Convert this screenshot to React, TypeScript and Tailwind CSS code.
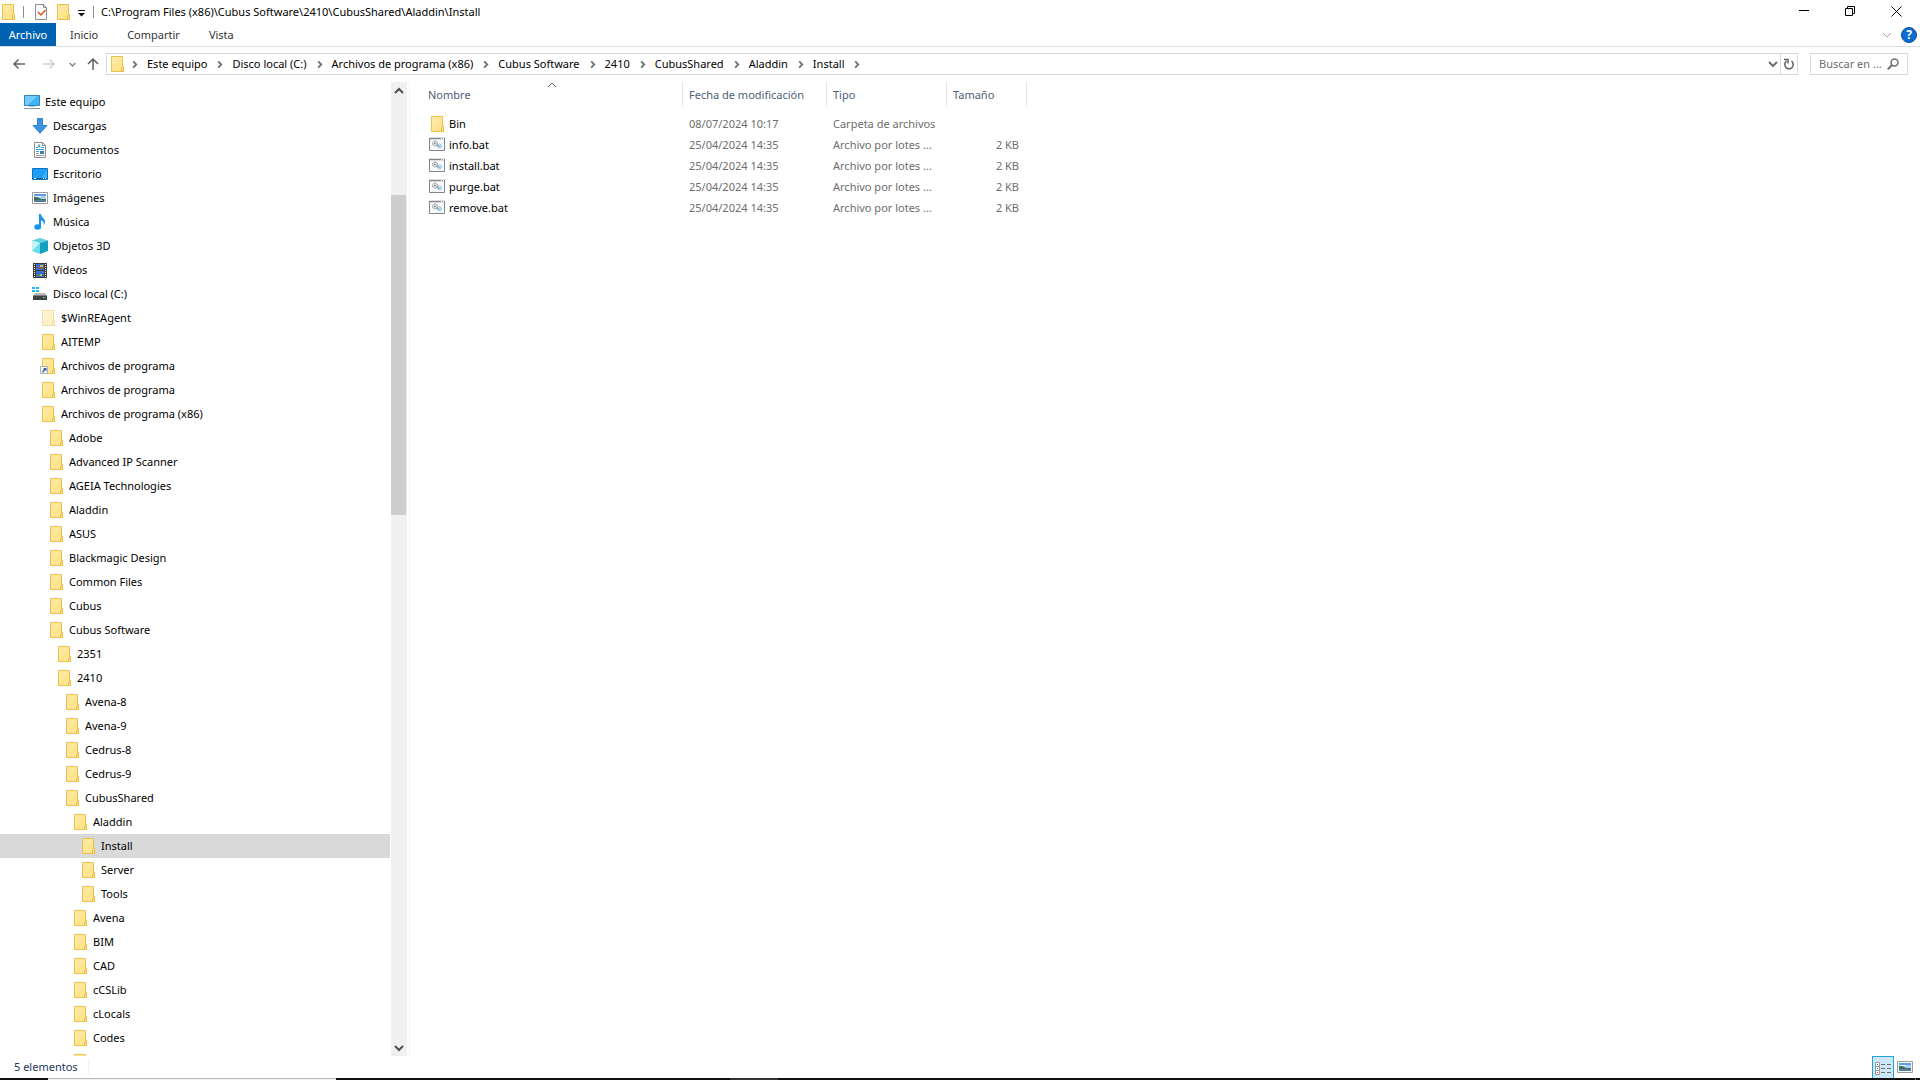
import React from 'react'

type IconName =
    | 'pc' | 'downloads' | 'documents' | 'desktop' | 'pictures' | 'music'
    | 'objects' | 'videos' | 'disk' | 'folder' | 'hidden' | 'shortcut' | 'bat'

type TreeItem = { name: string; level: number; icon?: IconName; selected?: boolean }

const tree: TreeItem[] = [
    { name: 'Este equipo', level: 0, icon: 'pc' },
    { name: 'Descargas', level: 1, icon: 'downloads' },
    { name: 'Documentos', level: 1, icon: 'documents' },
    { name: 'Escritorio', level: 1, icon: 'desktop' },
    { name: 'Imágenes', level: 1, icon: 'pictures' },
    { name: 'Música', level: 1, icon: 'music' },
    { name: 'Objetos 3D', level: 1, icon: 'objects' },
    { name: 'Vídeos', level: 1, icon: 'videos' },
    { name: 'Disco local (C:)', level: 1, icon: 'disk' },
    { name: '$WinREAgent', level: 2, icon: 'hidden' },
    { name: 'AITEMP', level: 2 },
    { name: 'Archivos de programa', level: 2, icon: 'shortcut' },
    { name: 'Archivos de programa', level: 2 },
    { name: 'Archivos de programa (x86)', level: 2 },
    { name: 'Adobe', level: 3 },
    { name: 'Advanced IP Scanner', level: 3 },
    { name: 'AGEIA Technologies', level: 3 },
    { name: 'Aladdin', level: 3 },
    { name: 'ASUS', level: 3 },
    { name: 'Blackmagic Design', level: 3 },
    { name: 'Common Files', level: 3 },
    { name: 'Cubus', level: 3 },
    { name: 'Cubus Software', level: 3 },
    { name: '2351', level: 4 },
    { name: '2410', level: 4 },
    { name: 'Avena-8', level: 5 },
    { name: 'Avena-9', level: 5 },
    { name: 'Cedrus-8', level: 5 },
    { name: 'Cedrus-9', level: 5 },
    { name: 'CubusShared', level: 5 },
    { name: 'Aladdin', level: 6 },
    { name: 'Install', level: 7, selected: true },
    { name: 'Server', level: 7 },
    { name: 'Tools', level: 7 },
    { name: 'Avena', level: 6 },
    { name: 'BIM', level: 6 },
    { name: 'CAD', level: 6 },
    { name: 'cCSLib', level: 6 },
    { name: 'cLocals', level: 6 },
    { name: 'Codes', level: 6 },
    { name: '', level: 6 },
]

const indent = ['pl-6', 'pl-8', 'pl-10', 'pl-12', 'pl-14', 'pl-16', 'pl-18', 'pl-20']

const crumbs = ['Este equipo', 'Disco local (C:)', 'Archivos de programa (x86)', 'Cubus Software', '2410', 'CubusShared', 'Aladdin', 'Install']

const files: { name: string; date: string; type: string; size: string; icon: IconName }[] = [
    { name: 'Bin', date: '08/07/2024 10:17', type: 'Carpeta de archivos', size: '', icon: 'folder' },
    { name: 'info.bat', date: '25/04/2024 14:35', type: 'Archivo por lotes ...', size: '2 KB', icon: 'bat' },
    { name: 'install.bat', date: '25/04/2024 14:35', type: 'Archivo por lotes ...', size: '2 KB', icon: 'bat' },
    { name: 'purge.bat', date: '25/04/2024 14:35', type: 'Archivo por lotes ...', size: '2 KB', icon: 'bat' },
    { name: 'remove.bat', date: '25/04/2024 14:35', type: 'Archivo por lotes ...', size: '2 KB', icon: 'bat' },
]

function FolderShape() {
    return (
        <>
            <path d="M2.5 .5h11v10h1v5h-12z" fill="#ffe590" stroke="#eac24b" />
            <path d="M3 1h10L3 12z" fill="#ffe9a2" />
            <path d="M12.5 15.5v-4l1-1h1v5z" fill="#ffe590" stroke="#e8bd42" />
        </>
    )
}

function PictureShape() {
    return (
        <>
            <path d="M.5 2.5h15v11H.5z" fill="#fff" stroke="#9b9b9b" />
            <path d="M2 4h12v8H2z" fill="#a9d0f5" />
            <path d="M2 4h12v2H2z" fill="#5e9be8" />
            <path d="M3 6h6v1H3z" fill="#eef6fd" />
            <path d="M2 7l3 0 4 2h5v3H2z" fill="#3f6b62" />
            <path d="M2 10h12v2H2z" fill="#55819b" />
        </>
    )
}

function Icon({ name }: { name: IconName }) {
    return (
        <svg className="w-4 h-4 shrink-0" viewBox="0 0 16 16" fill="none" aria-hidden="true">
            {name === 'folder' && <FolderShape />}
            {name === 'hidden' && <g opacity=".5"><FolderShape /></g>}
            {name === 'shortcut' && (
                <>
                    <FolderShape />
                    <path d="M.5 8.5h7v7h-7z" fill="#fff" stroke="#b0b0b0" />
                    <path d="M3 10h3.500v3.500l-1.200-1.200C4 13 3.700 14 3.700 14.500H2.300c0-1.600.7-2.600 1.800-3.400z" fill="#2a5ea8" />
                </>
            )}
            {name === 'pc' && (
                <>
                    <path d="M.5 1.500h15v10H.5z" fill="#3fb4f5" stroke="#2d87bd" />
                    <path d="M1 2h12L4 11H1z" fill="#74ccfb" />
                    <path d="M5 13h6v-1H5z" fill="#b6c4ce" />
                    <path d="M0 14.500h16" stroke="#8599a8" />
                </>
            )}
            {name === 'downloads' && <path d="M5.500.5h5v7h4.500L8 15.300 1 7.500h4.500z" fill="#3f94e0" stroke="#2f7fca" />}
            {name === 'documents' && (
                <>
                    <path d="M2.500.5h8l3 3v12h-11z" fill="#fff" stroke="#8c8c8c" />
                    <path d="M10.500.5v3h3" stroke="#8c8c8c" />
                    <path d="M4 5.500h2l1-3 1 3M4 7.500h8M4 9.500h3M9 5.500h3" stroke="#2c9be0" />
                    <path d="M8 9h4v3H8z" fill="#3b82a8" />
                    <path d="M4 11.500h3M4 13.500h8" stroke="#9b9b9b" />
                </>
            )}
            {name === 'desktop' && (
                <>
                    <path d="M.5 2.500h15v11H.5z" fill="#1e9df5" stroke="#0b76c4" />
                    <path d="M9 13L15 3v10z" fill="#3fb0fb" />
                    <path d="M1 12.500h14" stroke="#0d5f9e" />
                    <path d="M2 12.500h2M11 12.500h1M13 12.500h1" stroke="#fff" />
                </>
            )}
            {name === 'pictures' && <PictureShape />}
            {name === 'music' && (
                <>
                    <path d="M7 0h2c0 3 4 4.500 4 8 0 1.300-.5 2.500-1.200 3.300.6-3-.8-4.300-2.800-5V13H7z" fill="#1795ee" />
                    <ellipse cx="5.700" cy="13" rx="3.400" ry="2.700" fill="#1795ee" />
                </>
            )}
            {name === 'objects' && (
                <>
                    <path d="M8 0l8 2.500-8 2.500-8-2.500z" fill="#5fd0df" />
                    <path d="M0 2.500L8 5v11l-8-3z" fill="#6fdbe6" />
                    <path d="M16 2.500L8 5v11l8-3z" fill="#12a0c0" />
                    <path d="M0 2.500L8 5l-8 8z" fill="#c4f3f6" />
                </>
            )}
            {name === 'videos' && (
                <>
                    <path d="M1 1h14v15H1z" fill="#3c3c3c" />
                    <path d="M4 2h8v6H4zM4 9h8v6H4z" fill="#3b6fc9" />
                    <path d="M7 5h4v2H7z" fill="#c9412e" />
                    <path d="M8 3h3v2H8zM8 12h2v2H8z" fill="#e0b43b" />
                    <path d="M9 6h2v1H9zM5 13h3v1H5z" fill="#3f9b4c" />
                    <path d="M2.500 2v14M13.500 2v14" stroke="#eee" strokeDasharray="1 1" />
                </>
            )}
            {name === 'disk' && (
                <>
                    <path d="M0 1h3v2H0zM4 1h3v2H4zM0 4h3v2H0zM4 4h3v2H4z" fill="#1fb6f0" />
                    <path d="M3 7h10l2 3H1z" fill="#b9b9b9" />
                    <path d="M1 9.500h14V14H1z" fill="#3f4347" />
                    <path d="M11 11h2v1h-2z" fill="#4be05a" />
                </>
            )}
            {name === 'bat' && (
                <>
                    <path d="M.5 1.500h15v12H.5z" fill="#fafafa" stroke="#7e868c" />
                    <path d="M0 1.500h16" stroke="#7e868c" strokeWidth="1.500" />
                    <path d="M12 1.500h1M14 1.500h1" stroke="#fff" />
                    <circle cx="6" cy="6.500" r="2.500" fill="#e3e6e8" stroke="#7e868c" strokeDasharray="1 .5" />
                    <circle cx="6" cy="6.500" r=".8" fill="#5f676d" />
                    <circle cx="10.500" cy="9" r="2" fill="#c8e8f8" stroke="#64b0d8" strokeDasharray="1 .5" />
                    <path d="M8 7.500l2.500 2.500" stroke="#5f8fa8" />
                </>
            )}
        </svg>
    )
}

function Chevron({ className, d, stroke = 1 }: { className: string; d: string; stroke?: number }) {
    return (
        <svg className={className} viewBox="0 0 10 10" fill="none" stroke="currentColor" strokeWidth={stroke} aria-hidden="true">
            <path d={d} />
        </svg>
    )
}

const DOWN = 'M1 3l4 4 4-4'
const UP = 'M1 7l4-4 4 4'
const RIGHT = 'M3.500 1.500L7 5 3.500 8.500'

function TitleBar() {
    return (
        <header className="flex items-center h-[23px] shrink-0">
            <Icon name="folder" />
            <span className="w-px h-3 ml-[7px] bg-[#8c8c8c]" />
            <button aria-label="Propiedades" className="ml-2.5">
                <svg className="w-4 h-4" viewBox="0 0 16 16" fill="none">
                    <path d="M1.500 .5h8l3 3v12h-11z" fill="#f7f9fb" stroke="#8f8f8f" />
                    <path d="M9.500.5v3h3" stroke="#8f8f8f" />
                    <path d="M4 8l3 3 4.500-5" stroke="#e8551c" strokeWidth="1.500" />
                </svg>
            </button>
            <button aria-label="Nueva carpeta" className="ml-[5px]"><Icon name="folder" /></button>
            <button aria-label="Personalizar barra" className="ml-[7px]">
                <svg className="w-2 h-4" viewBox="0 0 8 16">
                    <path d="M0 6h7v1H0zM0 9h7l-3.500 3.500z" fill="#111" />
                </svg>
            </button>
            <span className="w-px h-3 ml-[7px] bg-[#8c8c8c]" />
            <h1 className="ml-[7px] flex-1">C:\Program Files (x86)\Cubus Software\2410\CubusShared\Aladdin\Install</h1>
            <div className="flex pr-px">
                <button aria-label="Minimizar" className="flex justify-center w-[46px]">
                    <svg className="w-[11px] h-[11px]" viewBox="0 0 11 11" stroke="#000"><path d="M0 4.500h10" /></svg>
                </button>
                <button aria-label="Restaurar" className="flex justify-center w-[46px]">
                    <svg className="w-[11px] h-[11px]" viewBox="0 0 11 11" fill="none" stroke="#000"><path d="M.5 2.500h7v7h-7zM2.500 2.500v-2h7v7h-2" /></svg>
                </button>
                <button aria-label="Cerrar" className="flex justify-center w-[46px]">
                    <svg className="w-[11px] h-[11px]" viewBox="0 0 11 11" stroke="#000"><path d="M.5.5l10 10M10.500.5l-10 10" /></svg>
                </button>
            </div>
        </header>
    )
}

function RibbonTabs() {
    return (
        <nav className="flex items-center h-6 shrink-0 border-b border-[#d9dadb] text-[#333]">
            <button className="w-14 h-full bg-[#0063b1] text-white">Archivo</button>
            <button className="ml-3.5">Inicio</button>
            <button className="ml-[29px]">Compartir</button>
            <button className="ml-[29px]">Vista</button>
            <button aria-label="Expandir cinta" className="ml-auto mr-[9px] text-[#a5a5a5]">
                <Chevron className="w-2.5 h-2.5" d={DOWN} />
            </button>
            <button aria-label="Ayuda" className="flex items-center justify-center w-4 h-4 mr-[3px] rounded-full border border-[#0b4f94] bg-[#0a6cd0] text-white text-[12px] font-bold">?</button>
        </nav>
    )
}

function AddressBar() {
    return (
        <div className="flex items-center h-[35px] shrink-0 pb-px pr-3">
            <button aria-label="Atrás" className="ml-[13px]">
                <svg className="w-3 h-3" viewBox="0 0 12 12" fill="none" stroke="#606060" strokeWidth="1.500"><path d="M12 6H1M5.500 1.500L1 6l4.500 4.500" /></svg>
            </button>
            <button aria-label="Adelante" className="ml-[18px]">
                <svg className="w-3 h-3" viewBox="0 0 12 12" fill="none" stroke="#d0d0d0" strokeWidth="1.500"><path d="M0 6h11M6.500 1.500L11 6l-4.500 4.500" /></svg>
            </button>
            <button aria-label="Recientes" className="ml-3.5 text-[#808080]">
                <Chevron className="w-[7px] h-[7px]" d={DOWN} stroke={2} />
            </button>
            <button aria-label="Subir" className="ml-[11px]">
                <svg className="w-3 h-3" viewBox="0 0 12 12" fill="none" stroke="#606060" strokeWidth="1.500"><path d="M6 12V1M1 6l5-5 5 5" /></svg>
            </button>
            <div className="flex flex-1 items-center h-[22px] ml-[7px] pl-0.5 border border-[#d9d9d9]">
                <Icon name="folder" />
                <Chevron className="w-[9px] h-[9px] ml-[5px] mr-2 text-[#707070]" d={RIGHT} stroke={2} />
                {crumbs.map((c) => (
                    <React.Fragment key={c}>
                        <button>{c}</button>
                        <Chevron className="w-[9px] h-[9px] mx-2 text-[#707070]" d={RIGHT} stroke={2} />
                    </React.Fragment>
                ))}
                <button aria-label="Ubicaciones anteriores" className="ml-auto mr-0.5 text-[#707070]">
                    <Chevron className="w-2.5 h-2.5" d={DOWN} stroke={2} />
                </button>
                <button aria-label="Actualizar" className="flex items-center justify-center w-[17px] h-full border-l border-[#d9d9d9]">
                    <svg className="w-3 h-3" viewBox="0 0 12 12" fill="none" stroke="#606060" strokeWidth="1.500">
                        <path d="M8.500 3.200A4.200 4.200 0 1 1 3.500 3.200M1 1.500h4v4" />
                    </svg>
                </button>
            </div>
            <div className="flex items-center w-[98px] h-[22px] ml-3 pl-2 pr-2 border border-[#d9d9d9]">
                <input aria-label="Buscar" placeholder="Buscar en ..." className="w-0 flex-1 outline-none placeholder:text-[#6d6d6d]" />
                <svg className="w-3 h-3" viewBox="0 0 12 12" fill="none" stroke="#707070">
                    <circle cx="7.500" cy="4.500" r="3.500" strokeWidth="1.500" />
                    <path d="M5 7L.8 11.200" strokeWidth="2" />
                </svg>
            </div>
        </div>
    )
}

function Sidebar() {
    return (
        <aside className="flex w-[410px] shrink-0 border-r border-[#f3f3f3]">
            <ul className="flex-1 min-h-0 overflow-hidden pt-2">
                {tree.map((item, i) => (
                    <li key={i}>
                        <button className={`flex items-center gap-[5px] w-[390px] h-6 text-left ${indent[item.level]} ${item.selected ? 'bg-[#d9d9d9]' : ''}`}>
                            <Icon name={item.icon ?? 'folder'} />
                            {item.name}
                        </button>
                    </li>
                ))}
            </ul>
            <div className="flex flex-col items-center w-4 mr-0.5 bg-[#f0f0f0] text-[#505050]">
                <button aria-label="Desplazar arriba" className="flex items-center justify-center h-[17px]">
                    <Chevron className="w-2.5 h-2.5" d={UP} stroke={2} />
                </button>
                <div className="flex-1 w-full pt-24">
                    <div className="w-[15px] h-80 bg-[#cdcdcd]" />
                </div>
                <button aria-label="Desplazar abajo" className="flex items-center justify-center h-[17px]">
                    <Chevron className="w-2.5 h-2.5" d={DOWN} stroke={2} />
                </button>
            </div>
        </aside>
    )
}

function FileList() {
    return (
        <section className="flex-1 min-w-0 overflow-hidden">
            <table className="table-fixed w-[617px] border-separate border-spacing-0 text-left text-[#6d6d6d]">
                <thead className="text-[#4c607a]">
                    <tr className="h-[25px]">
                        <th className="relative w-[273px] p-0 pl-[18px] border-r border-[#e5e5e5] font-normal">
                            Nombre
                            <Chevron className="absolute -top-0.5 left-[137px] w-2.5 h-2.5 text-[#606060]" d={UP} />
                        </th>
                        <th className="w-36 p-0 pl-1.5 border-r border-[#e5e5e5] font-normal">Fecha de modificación</th>
                        <th className="w-30 p-0 pl-1.5 border-r border-[#e5e5e5] font-normal">Tipo</th>
                        <th className="w-20 p-0 pl-1.5 border-r border-[#e5e5e5] font-normal">Tamaño</th>
                    </tr>
                </thead>
                <tbody className="before:block before:h-1.5">
                    {files.map((f) => (
                        <tr key={f.name} className="h-[21px]">
                            <td className="p-0 pl-[19px] text-black">
                                <div className="flex items-center gap-1">
                                    <Icon name={f.icon} />
                                    {f.name}
                                </div>
                            </td>
                            <td className="p-0 pl-1.5">{f.date}</td>
                            <td className="p-0 pl-1.5">{f.type}</td>
                            <td className="p-0 pr-2 text-right">{f.size}</td>
                        </tr>
                    ))}
                </tbody>
            </table>
        </section>
    )
}

function StatusBar() {
    return (
        <footer className="flex items-center h-[22px] shrink-0 pr-[7px] text-[#1e395b]">
            <span className="ml-3.5">5 elementos</span>
            <span className="w-px h-4 ml-2.5 bg-[#f0f0f0]" />
            <button aria-label="Detalles" className="flex items-center justify-center w-[22px] h-full ml-auto border border-b-0 border-[#26a0da] bg-[#cce8f6]">
                <svg className="w-4 h-4" viewBox="0 0 16 16" fill="none">
                    <path d="M.5 2.500h4v12h-4zM.5 6.500h4M.5 10.500h4" fill="#fff" stroke="#9b9b9b" />
                    <path d="M2 4.500h1" stroke="#4c8a55" />
                    <path d="M2 8.500h1" stroke="#2f8fe0" />
                    <path d="M2 12.500h1" stroke="#d8392b" />
                    <path d="M6 4.500h4M12 4.500h4M6 8.500h4M12 8.500h4M6 12.500h4M12 12.500h4" stroke="#6d6d6d" />
                </svg>
            </button>
            <button aria-label="Iconos grandes" className="ml-[3px]"><Icon name="pictures" /></button>
        </footer>
    )
}

export default function App() {
    return (
        <div className="flex flex-col h-screen overflow-hidden bg-white text-black text-[11px] leading-4 font-['Noto_Sans','Open_Sans',sans-serif]">
            <TitleBar />
            <RibbonTabs />
            <AddressBar />
            <main className="flex flex-1 min-h-0">
                <Sidebar />
                <FileList />
            </main>
            <StatusBar />
            {/* Top edge of the taskbar */}
            <div className="flex h-0.5 shrink-0 bg-[#101010]">
                <div className="w-72 ml-12 border-t border-[#b8b8b8] bg-[#f0f0f0]" />
                <div className="w-12 ml-[394px] bg-[#333]" />
                <div className="w-px ml-auto mr-1 bg-[#777]" />
            </div>
        </div>
    )
}
